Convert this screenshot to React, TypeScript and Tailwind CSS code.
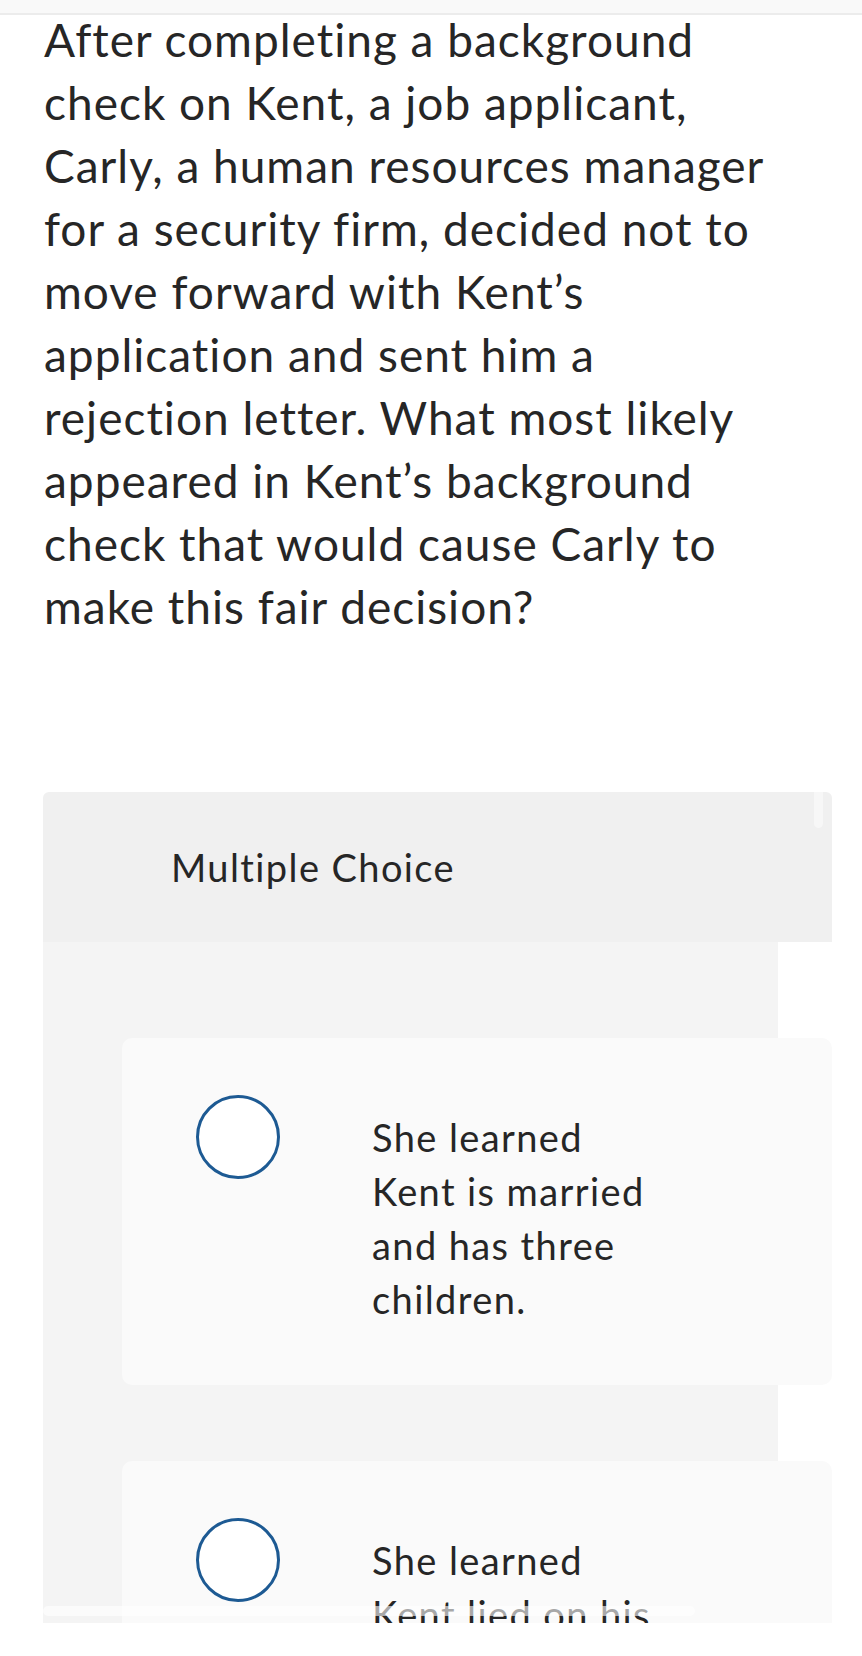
const options = [
  'She learned Kent is married and has three children.',
  'She learned Kent lied on his application about his past employment.',
];

function Radio() {
  return <div className="h-[84px] w-[84px] shrink-0 rounded-full border-[3px] border-[#1d5a93] bg-white" />;
}

export default function App() {
  return (
    <div className="min-h-[1656px] bg-white font-['Lato',sans-serif] text-[#262626]">
      <div className="h-[15px] border-b-2 border-[#ececec] bg-[#f9f9f9]" />

      <p className="-mt-[7px] w-[782px] pl-[44px] text-[46px] leading-[63px] tracking-[1px]">
        After completing a background check on Kent, a job applicant, Carly, a human resources manager for a
        security firm, decided not to move forward with Kent’s application and sent him a rejection letter. What
        most likely appeared in Kent’s background check that would cause Carly to make this fair decision?
      </p>

      <div className="relative ml-[43px] mt-[154px] h-[831px] w-[789px] overflow-hidden rounded-t-[6px]">
        <div className="flex h-[150px] items-center bg-[#f0f0f0] pl-[128px] text-[38px] tracking-[1.4px]">
          Multiple Choice
        </div>

        <div className="w-[735px] space-y-[76px] bg-[#f4f4f4] pl-[79px] pt-[96px] pb-[76px]">
          {options.map((text) => (
            <div key={text} className="flex w-[710px] rounded-[10px] bg-[#fafafa] pb-[59px] pl-[74px] pt-[57px]">
              <Radio />
              <p className="ml-[92px] mt-[15px] w-[292px] text-[38px] leading-[54px] tracking-[1.4px]">{text}</p>
            </div>
          ))}
        </div>

        {/* scrollbar thumbs */}
        <div className="absolute right-[9px] top-0 h-[36px] w-[9px] rounded-b-full bg-[#f7f7f7]" />
        <div className="absolute bottom-[7px] left-0 h-[10px] w-[652px] rounded-full bg-white/60" />
      </div>
    </div>
  );
}
